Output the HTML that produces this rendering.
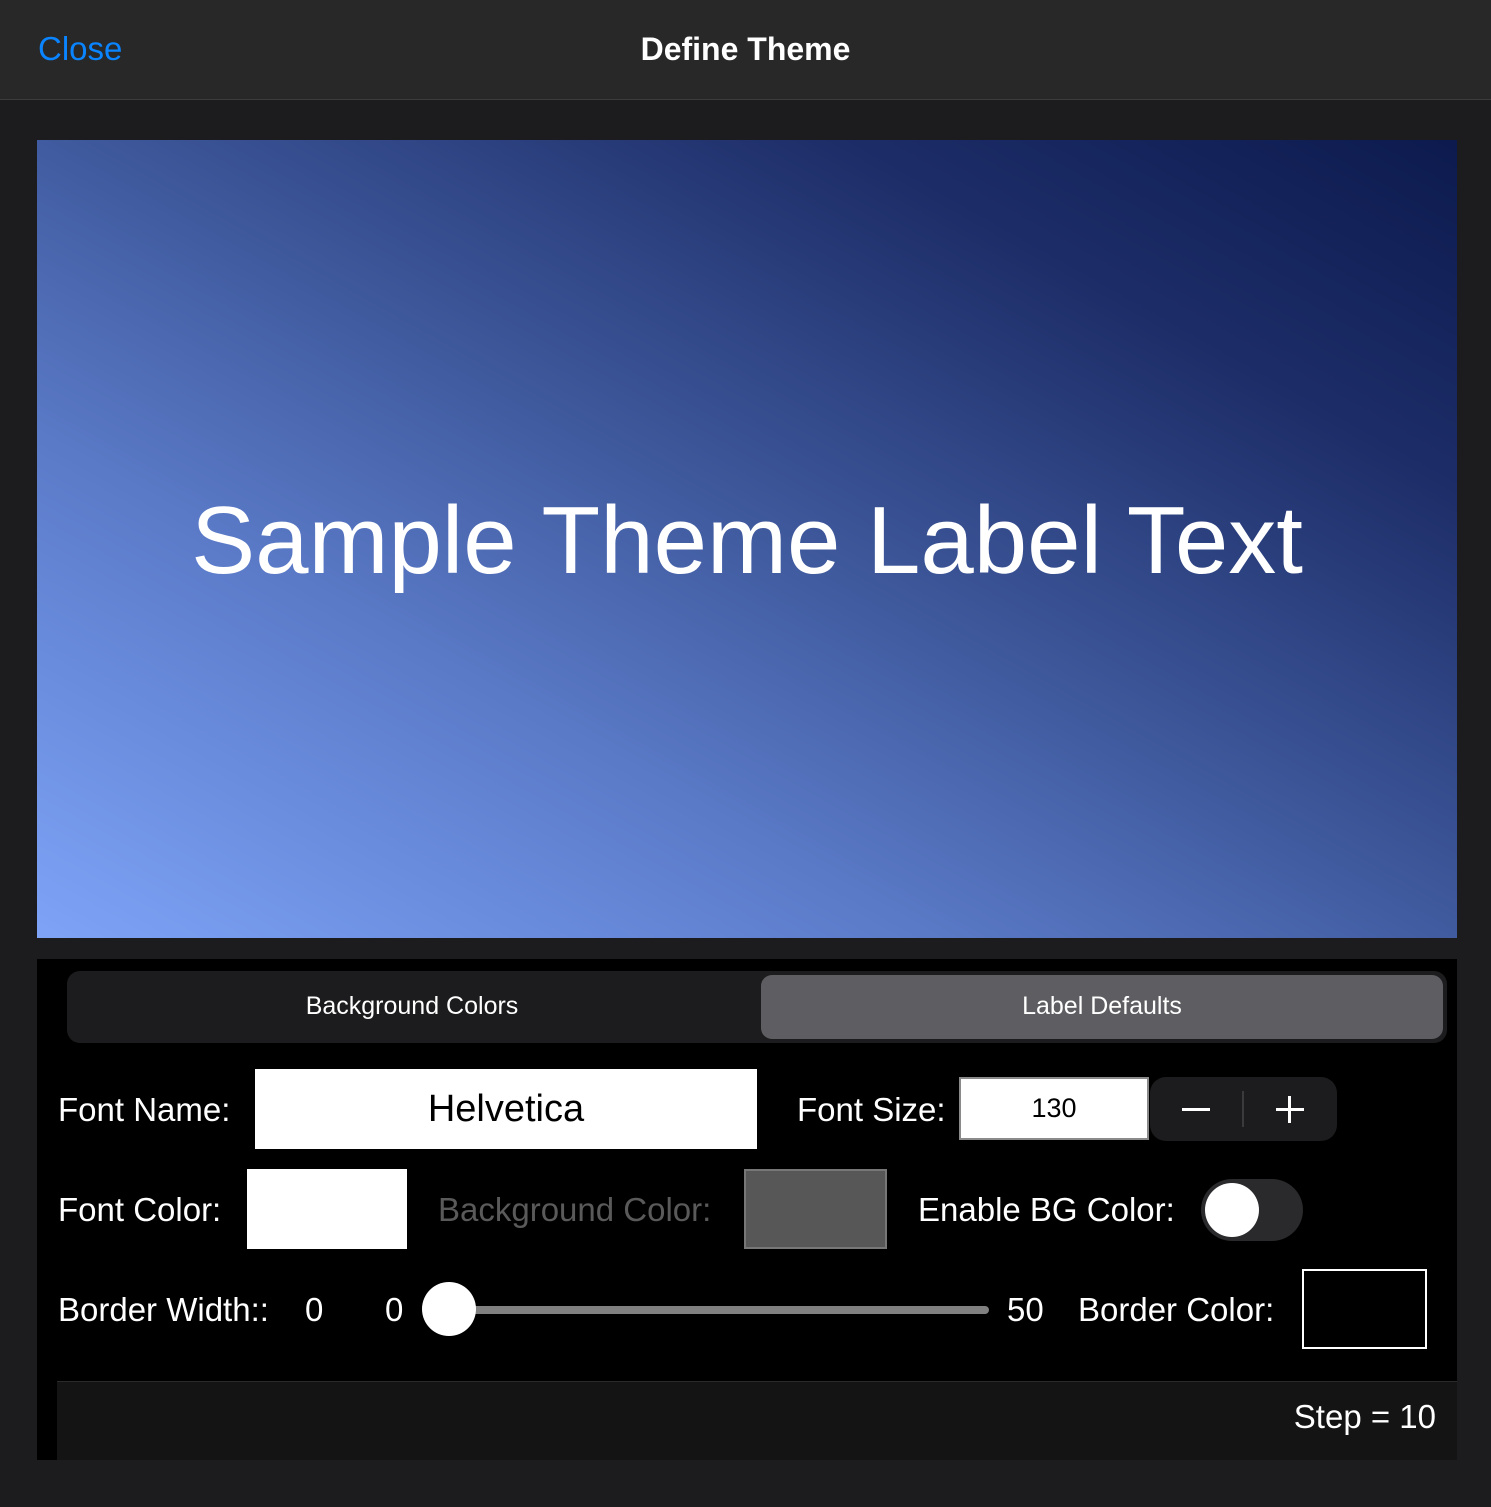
<!DOCTYPE html>
<html><head><meta charset="utf-8"><style>
*{margin:0;padding:0;box-sizing:border-box}
body{width:1491px;height:1507px;background:#1c1c1e;font-family:"Liberation Sans",Helvetica,Arial,sans-serif;position:relative;overflow:hidden;color:#fff}
.a{position:absolute}
.lbl{font-size:33px;line-height:40px;white-space:nowrap}
</style></head><body>
<div class="a" style="left:0;top:0;width:1491px;height:100px;background:#282828;border-bottom:1px solid #3d3d3d"></div>
<div class="a" style="left:38px;top:30px;font-size:33px;color:#0a84ff">Close</div>
<div class="a" style="left:0;width:1491px;text-align:center;top:31px;font-size:32px;font-weight:bold">Define Theme</div>

<div class="a" style="left:37px;top:140px;width:1420px;height:798px;background:linear-gradient(to top right,#7ea3f7 0%,#5c7cca 30%,#3a5395 55%,#1d2d68 78%,#0c1a4e 100%);"></div>
<div class="a" style="left:37px;top:486px;width:1420px;text-align:center;font-size:96px;line-height:110px">Sample Theme Label Text</div>

<div class="a" style="left:37px;top:959px;width:1420px;height:501px;background:#000"></div>
<div class="a" style="left:67px;top:971px;width:1380px;height:72px;background:#1c1c1e;border-radius:13px"></div>
<div class="a" style="left:761px;top:975px;width:682px;height:64px;background:#5e5e62;border-radius:11px"></div>
<div class="a" style="left:67px;top:992px;width:690px;text-align:center;font-size:25px">Background Colors</div>
<div class="a" style="left:761px;top:992px;width:682px;text-align:center;font-size:25px">Label Defaults</div>

<div class="a lbl" style="left:58px;top:1090px">Font Name:</div>
<div class="a" style="left:255px;top:1069px;width:502px;height:80px;background:#fff;color:#000;font-size:38px;line-height:80px;text-align:center">Helvetica</div>
<div class="a lbl" style="left:797px;top:1090px">Font Size:</div>
<div class="a" style="left:959px;top:1077px;width:190px;height:63px;background:#fff;border:2px solid #8a8a8a;color:#000;font-size:27px;line-height:59px;text-align:center">130</div>
<div class="a" style="left:1150px;top:1077px;width:187px;height:64px;background:#1c1c1e;border-radius:16px"></div>
<div class="a" style="left:1182px;top:1108px;width:28px;height:3px;background:#fff"></div>
<div class="a" style="left:1242px;top:1091px;width:2px;height:36px;background:#3a3a3c"></div>
<div class="a" style="left:1276px;top:1108px;width:28px;height:3px;background:#fff"></div>
<div class="a" style="left:1288px;top:1096px;width:3px;height:27px;background:#fff"></div>

<div class="a lbl" style="left:58px;top:1190px">Font Color:</div>
<div class="a" style="left:247px;top:1169px;width:160px;height:80px;background:#fff"></div>
<div class="a lbl" style="left:438px;top:1190px;color:#5a5a5a">Background Color:</div>
<div class="a" style="left:744px;top:1169px;width:143px;height:80px;background:#575757;border:2px solid #777"></div>
<div class="a lbl" style="left:918px;top:1190px">Enable BG Color:</div>
<div class="a" style="left:1201px;top:1179px;width:102px;height:62px;background:#2a2a2c;border-radius:31px"></div>
<div class="a" style="left:1205px;top:1183px;width:54px;height:54px;background:#fff;border-radius:50%"></div>

<div class="a lbl" style="left:58px;top:1290px">Border Width::</div>
<div class="a lbl" style="left:305px;top:1290px">0</div>
<div class="a lbl" style="left:385px;top:1290px">0</div>
<div class="a" style="left:449px;top:1306px;width:540px;height:8px;background:#808080;border-radius:4px"></div>
<div class="a" style="left:422px;top:1282px;width:54px;height:54px;background:#fff;border-radius:50%"></div>
<div class="a lbl" style="left:1007px;top:1290px">50</div>
<div class="a lbl" style="left:1078px;top:1290px">Border Color:</div>
<div class="a" style="left:1302px;top:1269px;width:125px;height:80px;border:2px solid #fff;background:#000"></div>

<div class="a" style="left:57px;top:1381px;width:1400px;height:79px;background:#141414;border-top:1px solid #2a2a2a"></div>
<div class="a lbl" style="right:55px;top:1397px">Step = 10</div>
</body></html>
